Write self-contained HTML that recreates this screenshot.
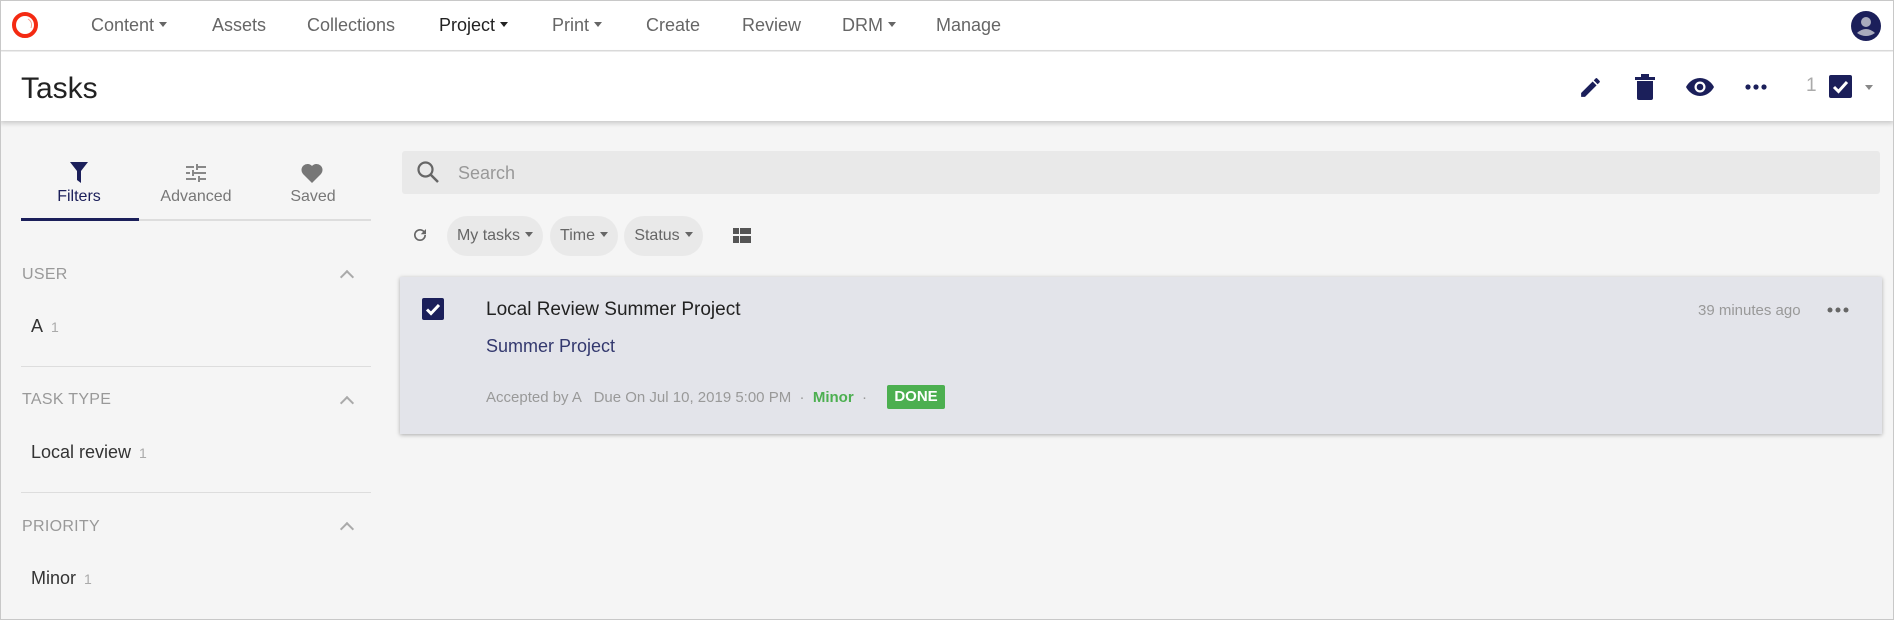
<!DOCTYPE html>
<html><head><meta charset="utf-8">
<style>
*{margin:0;padding:0;box-sizing:border-box}
body{width:1894px;height:620px;overflow:hidden;background:#f5f5f5;font-family:"Liberation Sans",sans-serif;position:relative}
.frame{position:absolute;left:0;top:0;width:1894px;height:620px;border:1px solid #c8c8c8;pointer-events:none;z-index:10}
.nav{position:absolute;left:0;top:0;width:1894px;height:51px;background:#fff;border-bottom:1px solid #ddd}
.nav span{position:absolute;top:15px;font-size:18px;color:#666}
.caret{display:inline-block;width:0;height:0;border-left:4px solid transparent;border-right:4px solid transparent;border-top:5px solid currentColor;vertical-align:middle;margin-left:5px;margin-top:-3px}
.hdr{position:absolute;left:0;top:52px;width:1894px;height:69px;background:#fff;box-shadow:0 2px 5px rgba(0,0,0,.2)}
.abs{position:absolute}
.tab{position:absolute;top:188px;font-size:16px;color:#777;transform:translateX(-50%)}
.sec{position:absolute;left:22px;font-size:16px;color:#999;letter-spacing:.3px}
.item{position:absolute;left:31px;font-size:18px;color:#333}
.item small{font-size:14px;color:#aaa;margin-left:8px}
.hr{position:absolute;left:21px;width:350px;height:1px;background:#ddd}
.chev{position:absolute;left:342px;width:10px;height:10px;border-left:2px solid #aaa;border-top:2px solid #aaa;transform:rotate(45deg)}
.chip{position:absolute;top:216px;height:40px;background:#e9e9e9;border-radius:20px;font-size:16px;color:#666;line-height:40px;text-align:center}
</style></head><body>
<div class="nav">
  <svg class="abs" style="left:11px;top:11px" width="28" height="28" viewBox="0 0 28 28"><circle cx="14" cy="14" r="11" fill="none" stroke="#f42a12" stroke-width="4"/><path d="M17 8 q5 3 3 9" stroke="#f8a090" stroke-width="1" fill="none"/></svg>
  <span style="left:91px">Content<i class="caret"></i></span>
  <span style="left:212px">Assets</span>
  <span style="left:307px">Collections</span>
  <span style="left:439px;color:#222">Project<i class="caret"></i></span>
  <span style="left:552px">Print<i class="caret"></i></span>
  <span style="left:646px">Create</span>
  <span style="left:742px">Review</span>
  <span style="left:842px">DRM<i class="caret"></i></span>
  <span style="left:936px">Manage</span>
  <svg class="abs" style="left:1851px;top:11px" width="30" height="30" viewBox="0 0 30 30"><circle cx="15" cy="15" r="15" fill="#1b1f5a"/><circle cx="15" cy="11" r="5" fill="#a9abbd"/><path d="M6 22 q9 -8 18 0 q-9 6 -18 0z" fill="#a9abbd"/></svg>
</div>
<div class="hdr">
  <div class="abs" style="left:21px;top:20px;font-size:30px;color:#222">Tasks</div>
  <svg class="abs" style="left:1578px;top:23px" width="25" height="25" viewBox="0 0 24 24"><path d="M3 17.25V21h3.75L17.810 9.94l-3.75-3.75L3 17.25zM20.71 7.04a1 1 0 000-1.41l-2.34-2.34a1 1 0 00-1.41 0l-1.830 1.83 3.750 3.75 1.830-1.83z" fill="#1b1f5a"/></svg>
  <svg class="abs" style="left:1634px;top:22px" width="22" height="26" viewBox="0 0 22 26"><rect x="1" y="3" width="20" height="3" fill="#1b1f5a"/><rect x="7" y="0" width="8" height="4" fill="#1b1f5a"/><path d="M3 7h16v17a2 2 0 01-2 2H5a2 2 0 01-2-2z" fill="#1b1f5a"/></svg>
  <svg class="abs" style="left:1686px;top:25px" width="28" height="20" viewBox="0 0 28 20"><path d="M14 1C7 1 2 6 0 10c2 4 7 9 14 9s12-5 14-9c-2-4-7-9-14-9z" fill="#1b1f5a"/><circle cx="14" cy="10" r="5.5" fill="#fff"/><circle cx="14" cy="10" r="3.3" fill="#1b1f5a"/></svg>
  <svg class="abs" style="left:1745px;top:32px" width="22" height="6"><circle cx="3" cy="3" r="2.6" fill="#1b1f5a"/><circle cx="11" cy="3" r="2.6" fill="#1b1f5a"/><circle cx="19" cy="3" r="2.6" fill="#1b1f5a"/></svg>
  <div class="abs" style="left:1806px;top:23px;font-size:19px;color:#aaa">1</div>
  <svg class="abs" style="left:1829px;top:23px" width="23" height="23" viewBox="0 0 23 23"><rect width="23" height="23" rx="2" fill="#1b1f5a"/><path d="M5 12l4.5 4.5L18 7" stroke="#fff" stroke-width="3" fill="none"/></svg>
  <i class="abs" style="left:1865px;top:33px;border-left:4px solid transparent;border-right:4px solid transparent;border-top:5px solid #888"></i>
</div>

<svg class="abs" style="left:70px;top:162px" width="18" height="21" viewBox="0 0 18 21"><path d="M0 0h18L11 9v12l-4-3V9z" fill="#1b1f5a"/></svg>
<svg class="abs" style="left:186px;top:164px" width="20" height="18" viewBox="0 0 20 18" fill="#888"><rect x="0" y="2" width="8" height="2"/><rect x="12" y="2" width="8" height="2"/><rect x="10" y="0" width="2" height="6"/><rect x="0" y="8" width="4" height="2"/><rect x="8" y="8" width="12" height="2"/><rect x="6" y="6" width="2" height="6"/><rect x="0" y="14" width="10" height="2"/><rect x="14" y="14" width="6" height="2"/><rect x="12" y="12" width="2" height="6"/></svg>
<svg class="abs" style="left:301px;top:163px" width="22" height="20" viewBox="0 0 22 20"><path d="M11 20L2 11A6 6 0 0111 3a6 6 0 019 8z" fill="#777"/></svg>
<div class="tab" style="left:79px;color:#1b1f5a">Filters</div>
<div class="tab" style="left:196px">Advanced</div>
<div class="tab" style="left:313px">Saved</div>
<div class="abs" style="left:21px;top:219px;width:350px;height:2px;background:#ddd"></div>
<div class="abs" style="left:21px;top:218px;width:118px;height:3px;background:#1b1f5a"></div>

<div class="sec" style="top:266px">USER</div><div class="chev" style="top:272px"></div>
<div class="item" style="top:316px">A<small>1</small></div>
<div class="hr" style="top:366px"></div>
<div class="sec" style="top:391px">TASK TYPE</div><div class="chev" style="top:398px"></div>
<div class="item" style="top:442px">Local review<small>1</small></div>
<div class="hr" style="top:492px"></div>
<div class="sec" style="top:518px">PRIORITY</div><div class="chev" style="top:524px"></div>
<div class="item" style="top:568px">Minor<small>1</small></div>

<div class="abs" style="left:402px;top:151px;width:1478px;height:43px;background:#e9e9e9;border-radius:3px"></div>
<svg class="abs" style="left:416px;top:160px" width="24" height="24" viewBox="0 0 24 24"><circle cx="9.5" cy="9.5" r="7" stroke="#666" stroke-width="2.2" fill="none"/><path d="M14.5 14.5L22 22" stroke="#666" stroke-width="2.5"/></svg>
<div class="abs" style="left:458px;top:163px;font-size:18px;color:#999">Search</div>

<svg class="abs" style="left:411px;top:226px" width="18" height="18" viewBox="0 0 24 24"><path d="M17.65 6.35A7.96 7.96 0 0012 4a8 8 0 108 8h-2.2A5.8 5.8 0 1112 6.2c1.6 0 3 .65 4.1 1.7L13 11h7V4z" fill="#666"/></svg>
<div class="chip" style="left:447px;width:96px">My tasks<i class="caret"></i></div>
<div class="chip" style="left:550px;width:68px">Time<i class="caret"></i></div>
<div class="chip" style="left:624px;width:79px">Status<i class="caret"></i></div>
<svg class="abs" style="left:733px;top:228px" width="18" height="15"><rect x="0" y="0" width="6" height="6" fill="#555"/><rect x="7" y="0" width="11" height="6" fill="#555"/><rect x="0" y="8" width="6" height="7" fill="#555"/><rect x="7" y="8" width="11" height="7" fill="#555"/></svg>

<div class="abs" style="left:400px;top:277px;width:1482px;height:157px;background:#e3e4ea;box-shadow:0 1px 4px rgba(0,0,0,.3)"></div>
<svg class="abs" style="left:422px;top:298px" width="22" height="22" viewBox="0 0 22 22"><rect width="22" height="22" rx="2" fill="#1b1f5a"/><path d="M5 11.5l4 4L17 7" stroke="#fff" stroke-width="3" fill="none"/></svg>
<div class="abs" style="left:486px;top:299px;font-size:19px;color:#222">Local Review Summer Project</div>
<div class="abs" style="left:486px;top:336px;font-size:18px;color:#33386e">Summer Project</div>
<div class="abs" style="left:486px;top:389px;font-size:15px;color:#999;white-space:nowrap">Accepted by A &nbsp; Due On Jul 10, 2019 5:00 PM &nbsp;·&nbsp; <b style="color:#4caf50">Minor</b> &nbsp;·&nbsp;</div>
<div class="abs" style="left:887px;top:385px;width:58px;height:24px;background:#4caf50;border-radius:2px;color:#fff;font-weight:bold;font-size:15px;line-height:24px;text-align:center">DONE</div>
<div class="abs" style="left:1698px;top:302px;font-size:15px;color:#999">39 minutes ago</div>
<svg class="abs" style="left:1827px;top:307px" width="22" height="6"><circle cx="3" cy="3" r="2.5" fill="#666"/><circle cx="11" cy="3" r="2.5" fill="#666"/><circle cx="19" cy="3" r="2.5" fill="#666"/></svg>
<div class="frame"></div>
</body></html>
